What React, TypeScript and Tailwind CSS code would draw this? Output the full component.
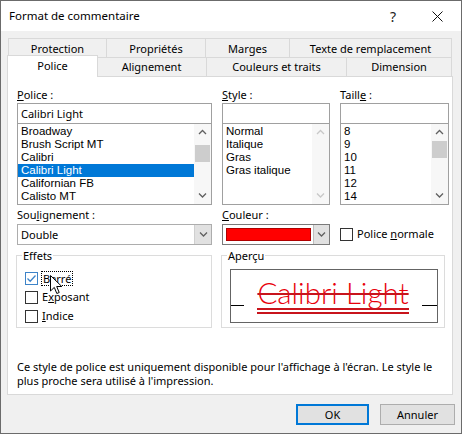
import React from 'react';

const UI = "font-['Noto_Sans',_'DejaVu_Sans',_sans-serif]";

function Chevron({ dir, off }: { dir: 'up' | 'down'; off?: boolean }) {
  const d = dir === 'up' ? 'M1 5 L4.5 1.5 L8 5' : 'M1 1.5 L4.5 5 L8 1.5';
  return (
    <svg width="9" height="7" viewBox="0 0 9 7">
      <path d={d} fill="none" stroke={off ? '#c8c8c8' : '#606060'} strokeWidth="1.3" />
    </svg>
  );
}

function ListBox({
  items,
  selected,
  thumbTop,
  off,
  width,
}: {
  items: string[];
  selected?: number;
  thumbTop?: number;
  off?: boolean;
  width: string;
}) {
  return (
    <div className={`${width} h-[81px] border-x border-b border-[#a0a0a0] bg-white flex`}>
      <div className="flex-1 flex flex-col pt-[1px] font-['Liberation_Sans',_Arial,_sans-serif] text-[11.5px]">
        {items.map((t, i) => (
          <div
            key={t}
            className={`h-[13px] leading-[13px] pl-[3px] whitespace-nowrap ${
              i === selected ? 'bg-[#0078d7] text-white' : ''
            }`}
          >
            {t}
          </div>
        ))}
      </div>
      <div className="w-[17px] bg-[#f7f7f7] flex flex-col">
        <div className="h-[17px] flex items-center justify-center">
          <Chevron dir="up" off={off} />
        </div>
        <div className="flex-1">
          {thumbTop !== undefined && (
            <div className="mx-[1px] h-[17px] bg-[#cdcdcd]" style={{ marginTop: thumbTop }} />
          )}
        </div>
        <div className="h-[17px] flex items-center justify-center">
          <Chevron dir="down" off={off} />
        </div>
      </div>
    </div>
  );
}

function Check({ checked }: { checked?: boolean }) {
  return (
    <div
      className={`w-[13px] h-[13px] bg-white border flex items-center justify-center shrink-0 ${
        checked ? 'border-[#3d83c8]' : 'border-[#333333]'
      }`}
    >
      {checked && (
        <svg width="11" height="11" viewBox="0 0 11 11">
          <path d="M1.5 5.5 L4.2 8.2 L9.5 2.5" fill="none" stroke="#3d83c8" strokeWidth="1.3" />
        </svg>
      )}
    </div>
  );
}

function GroupBox({ title, width, children }: { title: string; width: string; children: React.ReactNode }) {
  return (
    <div className={`relative ${width} h-[73px] border border-[#dcdcdc]`}>
      <span className="absolute -top-[8px] left-[5px] bg-white px-[1px] leading-[15px]">{title}</span>
      {children}
    </div>
  );
}

const backTabs = [
  { label: 'Protection', w: 'w-[99px]' },
  { label: 'Propriétés', w: 'w-[99px]' },
  { label: 'Marges', w: 'w-[84px]' },
  { label: 'Texte de remplacement', w: 'w-[162px]' },
];

const frontTabs = [
  { label: 'Alignement', w: 'w-[110px]' },
  { label: 'Couleurs et traits', w: 'w-[140px]' },
  { label: 'Dimension', w: 'w-[105px]' },
];

export default function App() {
  return (
    <div className={`${UI} text-[11px] text-black w-[462px] h-[434px] bg-[#f0f0f0] border border-[#6b6b6b] flex flex-col`}>
      {/* title bar */}
      <div className="h-[30px] bg-white flex items-center shrink-0">
        <span className="pl-[8px] text-[11.5px] flex-1">Format de commentaire</span>
        <span className="w-[20px] text-center text-[14px] text-[#222] mr-[29px]">?</span>
        <div className="w-[12px] mr-[17px] flex items-center">
          <svg width="11" height="11" viewBox="0 0 11 11">
            <path d="M0.5 0.5 L10.5 10.5 M10.5 0.5 L0.5 10.5" stroke="#111" strokeWidth="1" />
          </svg>
        </div>
      </div>

      {/* tabs */}
      <div className="pt-[7px] pl-[7px] shrink-0">
        <div className="flex h-[19px]">
          {backTabs.map((t, i) => (
            <div
              key={t.label}
              className={`${t.w} border-t border-r border-[#d9d9d9] ${i === 0 ? 'border-l' : ''} flex items-center justify-center pt-[2px]`}
            >
              {t.label}
            </div>
          ))}
        </div>
        <div className="flex items-end h-[19px] relative z-10">
          <div className="w-[91px] -ml-[1px] -mr-[1px] h-[22px] -mb-[1px] bg-white border-x border-t border-[#d9d9d9] flex items-center justify-center pb-[1px] relative z-10">
            Police
          </div>
          {frontTabs.map((t) => (
            <div
              key={t.label}
              className={`${t.w} h-[19px] border-t border-r border-[#d9d9d9] flex items-center justify-center`}
            >
              {t.label}
            </div>
          ))}
        </div>
      </div>

      {/* panel */}
      <div className="ml-[6px] w-[446px] h-[319px] bg-white border border-[#d9d9d9] pl-[9px] pt-[10px] flex flex-col shrink-0">
        <div className="flex gap-[10px]">
          <div className="flex flex-col">
            <div className="h-[16px] leading-[16px]">
              <span className="underline">P</span>olice :
            </div>
            <div className="w-[195px] h-[21px] border border-[#a0a0a0] pl-[3px] leading-[19px]">Calibri Light</div>
            <ListBox
              width="w-[195px]"
              items={['Broadway', 'Brush Script MT', 'Calibri', 'Calibri Light', 'Californian FB', 'Calisto MT']}
              selected={3}
              thumbTop={4}
            />
          </div>
          <div className="flex flex-col">
            <div className="h-[16px] leading-[16px]">
              <span className="underline">S</span>tyle :
            </div>
            <div className="w-[108px] h-[21px] border border-[#a0a0a0]" />
            <ListBox width="w-[108px]" items={['Normal', 'Italique', 'Gras', 'Gras italique']} off />
          </div>
          <div className="flex flex-col">
            <div className="h-[16px] leading-[16px]">
              Taill<span className="underline">e</span> :
            </div>
            <div className="w-[109px] h-[21px] border border-[#a0a0a0]" />
            <ListBox width="w-[109px]" items={['8', '9', '10', '11', '12', '14']} thumbTop={0} />
          </div>
        </div>

        <div className="flex gap-[10px] mt-[2px]">
          <div className="flex flex-col">
            <div className="h-[16px] leading-[16px]">
              Sou<span className="underline">l</span>ignement :
            </div>
            <div className="w-[195px] h-[21px] mt-[1px] border border-[#adadad] bg-white flex">
              <span className="flex-1 pl-[3px] leading-[19px]">Double</span>
              <div className="w-[17px] bg-[#e1e1e1] border-l border-[#cfcfcf] flex items-center justify-center">
                <Chevron dir="down" />
              </div>
            </div>
          </div>
          <div className="flex flex-col">
            <div className="h-[16px] leading-[16px]">
              <span className="underline">C</span>ouleur :
            </div>
            <div className="w-[108px] h-[21px] mt-[1px] border border-[#7a7a7a] bg-white flex">
              <div className="flex-1 p-[3px] pr-[2px]">
                <div className="h-full bg-[#ff0000] border border-[#b00000]" />
              </div>
              <div className="w-[16px] bg-[#e1e1e1] border-l border-[#bdbdbd] flex items-center justify-center">
                <Chevron dir="down" />
              </div>
            </div>
          </div>
          <div className="flex items-center gap-[4px] pt-[17px]">
            <Check />
            <span>
              Police <span className="underline">n</span>ormale
            </span>
          </div>
        </div>

        <div className="flex gap-[9px] mt-[10px] -ml-[1px]">
          <GroupBox title="Effets" width="w-[196px]">
            <div className="pt-[16px] pl-[8px] flex flex-col gap-[6px]">
              <div className="h-[13px] flex items-center gap-[3px]">
                <Check checked />
                <span className="border border-dotted border-black leading-[13px] px-[1px]">Barré</span>
              </div>
              <div className="h-[13px] flex items-center gap-[4px]">
                <Check />
                <span>
                  E<span className="underline">x</span>posant
                </span>
              </div>
              <div className="h-[13px] flex items-center gap-[4px]">
                <Check />
                <span>
                  <span className="underline">I</span>ndice
                </span>
              </div>
            </div>
            {/* mouse pointer */}
            <svg className="absolute left-[33px] top-[19px]" width="13" height="20" viewBox="0 0 13 20">
              <path
                d="M0.5 0.5 L0.5 16 L4.3 12.4 L6.8 18.5 L9.2 17.5 L6.7 11.5 L11.8 11.5 Z"
                fill="#fff"
                stroke="#000"
                strokeWidth="1"
                strokeLinejoin="round"
              />
            </svg>
          </GroupBox>
          <GroupBox title="Aperçu" width="w-[224px]">
            <div className="ml-[8px] mt-[13px] w-[208px] h-[54px] border border-[#646464] flex justify-between items-start">
              <div className="w-[13px] h-px bg-black mt-[35px]" />
              <div className="flex flex-col mt-[7px]">
                <span className="font-['Lato',_sans-serif] font-light text-[29.5px] leading-[32px] text-[#e8000b] line-through decoration-[#c8141c] decoration-[2px] whitespace-nowrap">
                  Calibri Light
                </span>
                <div className="-mt-[1px] h-[6px] border-y-2 border-[#c8141c]" />
              </div>
              <div className="w-[15px] h-px bg-black mt-[35px]" />
            </div>
          </GroupBox>
        </div>

        <p className="mt-[32px] leading-[14px] whitespace-nowrap">
          Ce style de police est uniquement disponible pour l'affichage à l'écran. Le style le
          <br />
          plus proche sera utilisé à l'impression.
        </p>
      </div>

      {/* buttons */}
      <div className="flex justify-end gap-[11px] pr-[6px] mt-[9px]">
        <button className="w-[73px] h-[21px] bg-[#e1e1e1] border-2 border-[#0078d7] leading-[17px]">OK</button>
        <button className="w-[75px] h-[21px] bg-[#e1e1e1] border border-[#adadad] leading-[19px]">Annuler</button>
      </div>
    </div>
  );
}
